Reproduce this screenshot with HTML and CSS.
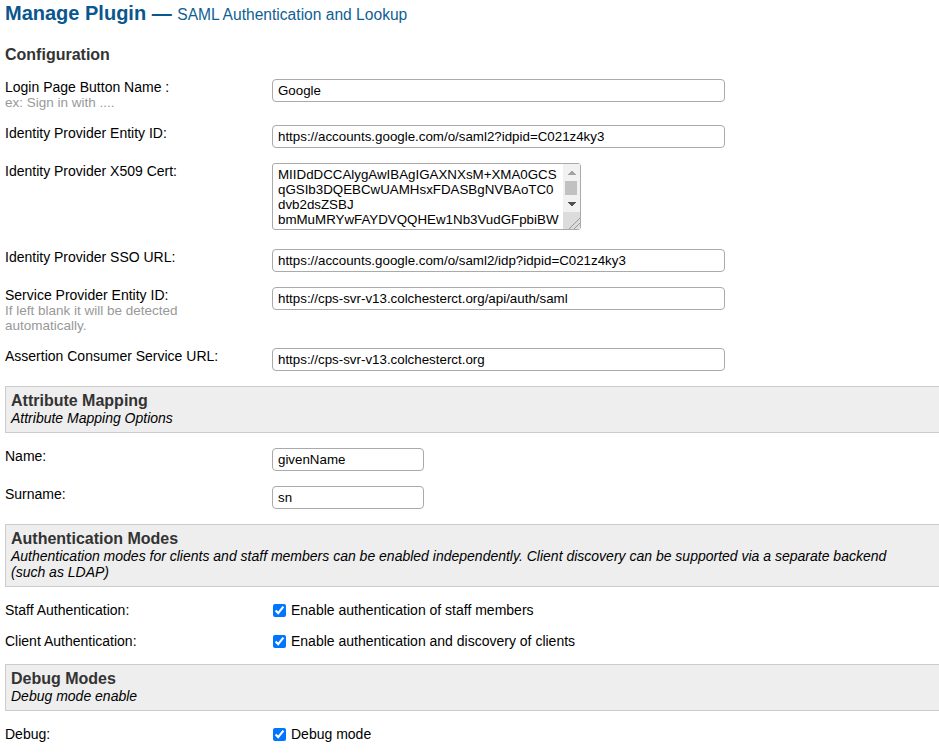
FILE: index.html
```html
<!DOCTYPE html>
<html>
<head>
<meta charset="utf-8">
<title>Manage Plugin</title>
<link rel="stylesheet" href="styles.css">
</head>
<body>
<div class="page">
  <h2 class="page-title">Manage Plugin <span class="dash">—</span> <small class="page-sub">SAML Authentication and Lookup</small></h2>
  <h3 class="config-title">Configuration</h3>
  <div class="form">
    <div class="label">Login Page Button Name :<div class="hint">ex: Sign in with ....</div></div>
    <div class="field"><input class="text wide" type="text" value="Google"></div>

    <div class="label">Identity Provider Entity ID:</div>
    <div class="field"><input class="text wide" type="text" value="https://accounts.google.com/o/saml2?idpid=C021z4ky3"></div>

    <div class="label">Identity Provider X509 Cert:</div>
    <div class="field">
      <div class="cert-wrap">
        <textarea class="cert">MIIDdDCCAlygAwIBAgIGAXNXsM+XMA0GCS
qGSIb3DQEBCwUAMHsxFDASBgNVBAoTC0
dvb2dsZSBJ
bmMuMRYwFAYDVQQHEw1Nb3VudGFpbiBW
aWV3MQ8wDQYDVQQDEwZHb29nbGUxGDAW
BgNVBAsTD0dvb2dsZSBGb3IgV29yazEL
MAkGA1UEBhMCVVMxEzARBgNVBAgTCkNh
bGlmb3JuaWEwHhcNMjAwNzE1MTQ0NzQ5</textarea>
        <div class="sb">
          <div class="sb-btn sb-up"></div>
          <div class="sb-track"><div class="sb-thumb"></div></div>
          <div class="sb-btn sb-down"></div>
          <div class="sb-corner"></div>
        </div>
      </div>
    </div>

    <div class="label">Identity Provider SSO URL:</div>
    <div class="field"><input class="text wide" type="text" value="https://accounts.google.com/o/saml2/idp?idpid=C021z4ky3"></div>

    <div class="label">Service Provider Entity ID:<div class="hint">If left blank it will be detected<br>automatically.</div></div>
    <div class="field"><input class="text wide" type="text" value="https://cps-svr-v13.colchesterct.org/api/auth/saml"></div>

    <div class="label">Assertion Consumer Service URL:</div>
    <div class="field"><input class="text wide" type="text" value="https://cps-svr-v13.colchesterct.org"></div>

    <div class="section">
      <div class="section-title">Attribute Mapping</div>
      <div class="section-desc">Attribute Mapping Options</div>
    </div>

    <div class="label">Name:</div>
    <div class="field"><input class="text short" type="text" value="givenName"></div>

    <div class="label">Surname:</div>
    <div class="field"><input class="text short" type="text" value="sn"></div>

    <div class="section">
      <div class="section-title">Authentication Modes</div>
      <div class="section-desc">Authentication modes for clients and staff members can be enabled independently. Client discovery can be supported via a separate backend (such as LDAP)</div>
    </div>

    <div class="label">Staff Authentication:</div>
    <div class="field"><label class="check"><input type="checkbox" checked> Enable authentication of staff members</label></div>

    <div class="label">Client Authentication:</div>
    <div class="field"><label class="check"><input type="checkbox" checked> Enable authentication and discovery of clients</label></div>

    <div class="section">
      <div class="section-title">Debug Modes</div>
      <div class="section-desc">Debug mode enable</div>
    </div>

    <div class="label">Debug:</div>
    <div class="field"><label class="check"><input type="checkbox" checked> Debug mode</label></div>
  </div>
</div>
</body>
</html>
```

FILE: styles.css
```css
html, body {
  margin: 0;
  padding: 0;
  background: #fff;
  overflow: hidden;
}

body {
  font-family: "Liberation Sans", Arial, sans-serif;
  font-size: 14px;
  line-height: 16px;
  color: #000;
}

.page {
  padding: 2px 0 0 5px;
}

.page-title {
  margin: 0;
  font-size: 20px;
  line-height: 23px;
  font-weight: bold;
  color: #0a568e;
}

.page-sub {
  font-size: 15.6px;
  font-weight: normal;
  color: #0f5f95;
}

.config-title {
  margin: 20px 0 0 0;
  font-size: 16px;
  line-height: 18px;
  font-weight: bold;
  color: #333;
}

.form {
  margin-top: 15px;
  display: grid;
  grid-template-columns: 267px 1fr;
  row-gap: 15px;
  align-items: start;
}

.label {
  line-height: 16px;
}

.hint {
  font-size: 13.5px;
  line-height: 15px;
  color: #999;
}

.field {
  display: flex;
  align-items: flex-start;
}

.text {
  box-sizing: border-box;
  height: 23px;
  margin: 0;
  padding: 0 5px;
  border: 1px solid #aaa;
  border-radius: 4px;
  font-family: "Liberation Sans", Arial, sans-serif;
  font-size: 13.33px;
  color: #000;
  background: #fff;
}

.wide {
  width: 453px;
}

.short {
  width: 152px;
}

.cert-wrap {
  position: relative;
  width: 309px;
  height: 67px;
  margin-bottom: 4px;
}

.cert {
  box-sizing: border-box;
  display: block;
  width: 309px;
  height: 67px;
  margin: 0;
  padding: 3px 22px 3px 5px;
  border: 1px solid #aaa;
  border-radius: 3px;
  font-family: "Liberation Sans", Arial, sans-serif;
  font-size: 13.33px;
  line-height: 15px;
  color: #000;
  resize: none;
  overflow: hidden;
  white-space: pre;
}

.sb {
  position: absolute;
  top: 1px;
  right: 1px;
  width: 17px;
  display: flex;
  flex-direction: column;
  background: #f1f1f1;
}

.sb-btn {
  height: 17px;
}

.sb-up {
  background: conic-gradient(from 135deg at 50% 0, #a3a3a3 90deg, transparent 0) no-repeat center / 8px 4px;
}

.sb-down {
  background: conic-gradient(from -45deg at 50% 100%, #505050 90deg, transparent 0) no-repeat center / 8px 4px;
}

.sb-track {
  height: 14px;
  display: flex;
}

.sb-thumb {
  flex: 1;
  margin: 0 3px 0 2px;
  background: #c1c1c1;
}

.sb-corner {
  height: 17px;
  background:
    linear-gradient(135deg, transparent 0 66%, #9a9a9a 66% 70%, transparent 70% 80%, #9a9a9a 80% 84%, transparent 84%) #dcdcdc;
  border-bottom-right-radius: 2px;
}

.section {
  grid-column: 1 / -1;
  background: #eee;
  border: 1px solid #ccc;
  border-right: 0;
  padding: 5px 30px 6px 5px;
}

.section-title {
  font-size: 16px;
  line-height: 18px;
  font-weight: bold;
  color: #333;
}

.section-desc {
  font-style: italic;
  font-size: 14px;
  line-height: 16px;
  color: #000;
}

.check {
  display: flex;
  align-items: center;
  line-height: 16px;
  color: #000;
}

.check input {
  width: 13px;
  height: 13px;
  margin: 0 5px 0 1px;
}
```
